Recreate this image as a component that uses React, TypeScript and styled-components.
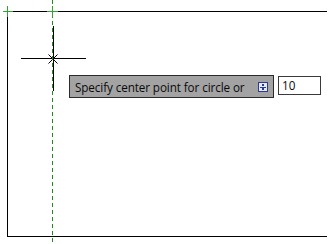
import React from "react";
import styled, { createGlobalStyle } from "styled-components";

const Global = createGlobalStyle`
  html, body { margin: 0; padding: 0; background: #ffffff; }
  body { font-family: "Open Sans", "DejaVu Sans", sans-serif; }
`;

const Viewport = styled.div`
  position: relative;
  width: 328px;
  height: 244px;
  overflow: hidden;
  background: #ffffff;
`;

const Drawing = styled.svg`
  position: absolute;
  left: 0;
  top: 0;
`;

const Prompt = styled.div`
  position: absolute;
  left: 69px;
  top: 75px;
  display: flex;
  align-items: flex-start;
  gap: 4px;
`;

const Tip = styled.div`
  box-sizing: border-box;
  width: 205px;
  height: 23px;
  background: #a3a3a3;
  border: 1px solid #2b2b2b;
  display: flex;
  align-items: center;
  justify-content: space-between;
  padding: 0 5px 0 5px;
  font-family: "Open Sans", "DejaVu Sans", sans-serif;
  font-size: 11.7px;
  letter-spacing: -0.1px;
  color: #0a0a0a;
  white-space: nowrap;
`;

const Field = styled.div`
  box-sizing: border-box;
  width: 43px;
  height: 19px;
  margin-top: 1px;
  background: #fff;
  border: 1px solid #3a3a3a;
  font-family: "Open Sans", "DejaVu Sans", sans-serif;
  font-size: 11.7px;
  color: #0a0a0a;
  padding: 0 0 0 3px;
  line-height: 16px;
`;

const ExpandIcon = () => (
  <svg width="10" height="10" viewBox="0 0 10 10">
    <rect x="0.5" y="0.5" width="9" height="9" fill="#e8e8f0" stroke="#2a3a9a" />
    <rect x="4" y="2" width="2" height="2" fill="#2a3a9a" />
    <rect x="2" y="5" width="6" height="1" fill="#2a3a9a" />
    <rect x="4" y="6" width="2" height="2" fill="#2a3a9a" />
  </svg>
);

export default function App() {
  return (
    <>
      <Global />
      <Viewport>
        <Drawing width="328" height="244" viewBox="0 0 328 244">
          <g stroke="#000" strokeWidth="1" shapeRendering="crispEdges">
            <line x1="7.5" y1="11.5" x2="327" y2="11.5" />
            <line x1="7.5" y1="11.5" x2="7.5" y2="237" />
            <line x1="7.5" y1="236.5" x2="327" y2="236.5" />
            <line x1="53.5" y1="26" x2="53.5" y2="91" />
            <line x1="21" y1="58.5" x2="86" y2="58.5" />
          </g>
          <g stroke="#000" strokeWidth="1">
            <line x1="48.5" y1="54.5" x2="57.5" y2="63.5" />
            <line x1="57.5" y1="54.5" x2="48.5" y2="63.5" />
          </g>
          <line
            x1="52.5"
            y1="0"
            x2="52.5"
            y2="244"
            stroke="#1f8a1f"
            strokeWidth="1"
            strokeDasharray="4 3"
            shapeRendering="crispEdges"
          />
          <g stroke="#35a035" strokeWidth="1" shapeRendering="crispEdges">
            <line x1="3" y1="11.5" x2="13" y2="11.5" />
            <line x1="7.5" y1="6" x2="7.5" y2="17" />
            <line x1="47" y1="11.5" x2="58" y2="11.5" />
            <line x1="52.5" y1="6" x2="52.5" y2="17" />
          </g>
        </Drawing>
        <Prompt>
          <Tip>
            <span>Specify center point for circle or</span>
            <ExpandIcon />
          </Tip>
          <Field>10</Field>
        </Prompt>
      </Viewport>
    </>
  );
}
